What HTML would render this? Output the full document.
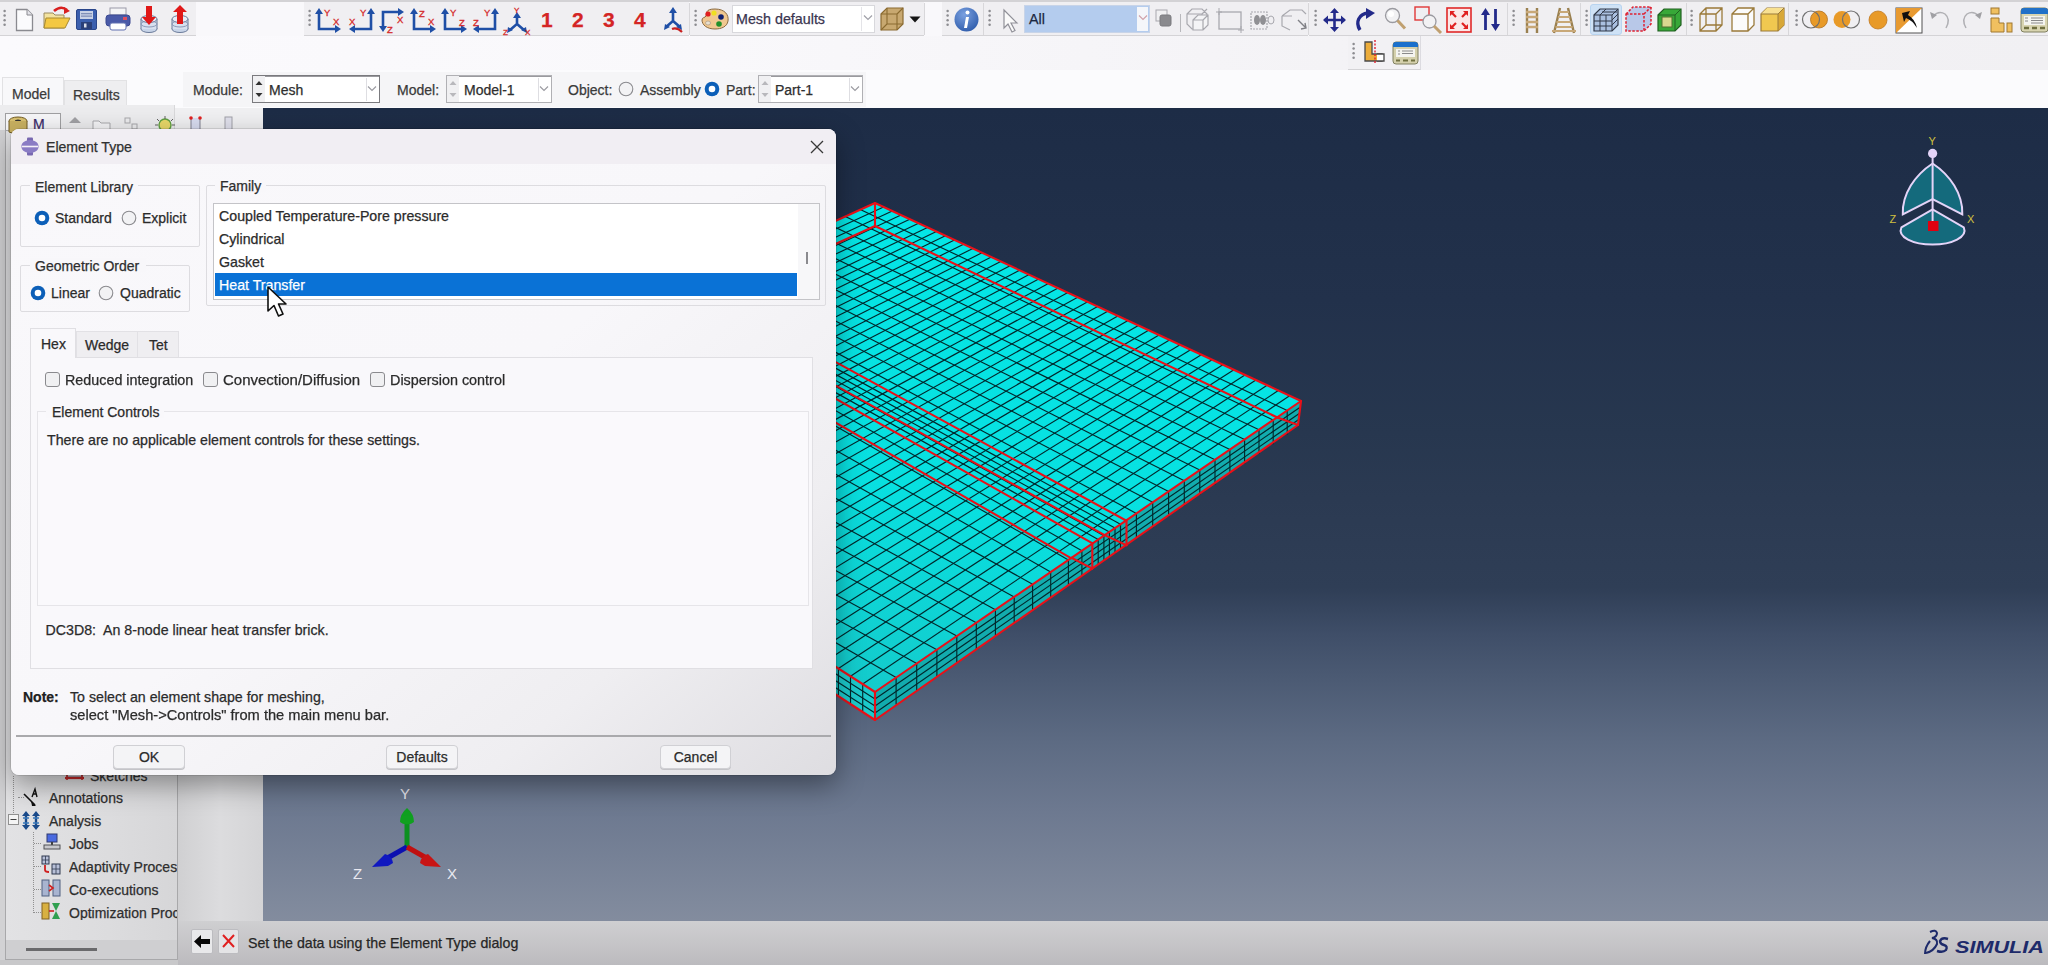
<!DOCTYPE html>
<html><head><meta charset="utf-8"><title>Abaqus</title>
<style>*{box-sizing:border-box;margin:0;padding:0}
html,body{width:2048px;height:965px;overflow:hidden;background:#f5f4f7;font-family:"Liberation Sans",sans-serif;color:#2b2b2b;position:relative}
.a{position:absolute}
.t{position:absolute;font-size:14px;white-space:nowrap;color:#2b2b2b;line-height:1;-webkit-text-stroke:0.25px currentColor}
#tb{left:0;top:0;width:2048px;height:108px;background:#f5f4f7}
#vp{left:263px;top:108px;width:1785px;height:813px;background:linear-gradient(#1d2c46 0%,#22314b 23.6%,#27374f 40%,#2b3a52 48%,#2f3e56 59%,#3f4e68 64.7%,#4b5a73 70%,#5d6b83 78%,#6d7990 86.6%,#7f899c 97.7%,#838c9e 100%)}
.grp{position:absolute;top:2px;height:34px;background:#f0eff2;border-bottom:1px solid #d4d3d6}
.grip{position:absolute;width:3px;height:18px;top:8px;background:radial-gradient(circle,#8a8a8a 0.9px,transparent 1.2px) 0 0/3px 4.5px}
</style></head><body>
<div id="tb" class="a"></div>
<div class="a" style="left:0;top:0;width:2048px;height:2px;background:#d3d2d5"></div>
<div class="a" style="left:0;top:2px;width:2048px;height:34px;background:#f9f8fb"></div>
<div class="a" style="left:0;top:36px;width:2048px;height:34px;background:linear-gradient(90deg,#fbfafd 0%,#f9f8fb 35%,#f4f3f6 65%,#f1f0f3 100%)"></div>
<div class="grp" style="left:0px;width:196px;top:2px;height:34px"></div>
<div class="grp" style="left:304px;width:385px;top:2px;height:34px"></div>
<div class="grp" style="left:690px;width:234px;top:2px;height:34px"></div>
<div class="grp" style="left:942px;width:41px;top:2px;height:34px"></div>
<div class="grp" style="left:983px;width:325px;top:2px;height:34px"></div>
<div class="grp" style="left:1309px;width:198px;top:2px;height:34px"></div>
<div class="grp" style="left:1507px;width:73px;top:2px;height:34px"></div>
<div class="grp" style="left:1580px;width:106px;top:2px;height:34px"></div>
<div class="grp" style="left:1686px;width:102px;top:2px;height:34px"></div>
<div class="grp" style="left:1788px;width:260px;top:2px;height:34px"></div>
<div class="a" style="left:689px;top:3px;width:1px;height:32px;background:#d8d7da"></div>
<div class="a" style="left:924px;top:3px;width:1px;height:32px;background:#d8d7da"></div>
<div class="a" style="left:983px;top:3px;width:1px;height:32px;background:#d8d7da"></div>
<div class="a" style="left:1308px;top:3px;width:1px;height:32px;background:#d8d7da"></div>
<div class="a" style="left:1507px;top:3px;width:1px;height:32px;background:#d8d7da"></div>
<div class="a" style="left:1580px;top:3px;width:1px;height:32px;background:#d8d7da"></div>
<div class="a" style="left:1686px;top:3px;width:1px;height:32px;background:#d8d7da"></div>
<div class="a" style="left:1788px;top:3px;width:1px;height:32px;background:#d8d7da"></div>
<svg class="a" style="left:3px;top:9px;overflow:visible;" width="4" height="19" viewBox="0 0 4 19"><circle cx="1.6" cy="2.0" r="1.25" fill="#8c8c90"/><circle cx="1.6" cy="6.6" r="1.25" fill="#8c8c90"/><circle cx="1.6" cy="11.2" r="1.25" fill="#8c8c90"/><circle cx="1.6" cy="15.8" r="1.25" fill="#8c8c90"/></svg>
<svg class="a" style="left:308px;top:9px;overflow:visible;" width="4" height="19" viewBox="0 0 4 19"><circle cx="1.6" cy="2.0" r="1.25" fill="#8c8c90"/><circle cx="1.6" cy="6.6" r="1.25" fill="#8c8c90"/><circle cx="1.6" cy="11.2" r="1.25" fill="#8c8c90"/><circle cx="1.6" cy="15.8" r="1.25" fill="#8c8c90"/></svg>
<svg class="a" style="left:694px;top:9px;overflow:visible;" width="4" height="19" viewBox="0 0 4 19"><circle cx="1.6" cy="2.0" r="1.25" fill="#8c8c90"/><circle cx="1.6" cy="6.6" r="1.25" fill="#8c8c90"/><circle cx="1.6" cy="11.2" r="1.25" fill="#8c8c90"/><circle cx="1.6" cy="15.8" r="1.25" fill="#8c8c90"/></svg>
<svg class="a" style="left:946px;top:9px;overflow:visible;" width="4" height="19" viewBox="0 0 4 19"><circle cx="1.6" cy="2.0" r="1.25" fill="#8c8c90"/><circle cx="1.6" cy="6.6" r="1.25" fill="#8c8c90"/><circle cx="1.6" cy="11.2" r="1.25" fill="#8c8c90"/><circle cx="1.6" cy="15.8" r="1.25" fill="#8c8c90"/></svg>
<svg class="a" style="left:988px;top:9px;overflow:visible;" width="4" height="19" viewBox="0 0 4 19"><circle cx="1.6" cy="2.0" r="1.25" fill="#8c8c90"/><circle cx="1.6" cy="6.6" r="1.25" fill="#8c8c90"/><circle cx="1.6" cy="11.2" r="1.25" fill="#8c8c90"/><circle cx="1.6" cy="15.8" r="1.25" fill="#8c8c90"/></svg>
<svg class="a" style="left:1314px;top:9px;overflow:visible;" width="4" height="19" viewBox="0 0 4 19"><circle cx="1.6" cy="2.0" r="1.25" fill="#8c8c90"/><circle cx="1.6" cy="6.6" r="1.25" fill="#8c8c90"/><circle cx="1.6" cy="11.2" r="1.25" fill="#8c8c90"/><circle cx="1.6" cy="15.8" r="1.25" fill="#8c8c90"/></svg>
<svg class="a" style="left:1512px;top:9px;overflow:visible;" width="4" height="19" viewBox="0 0 4 19"><circle cx="1.6" cy="2.0" r="1.25" fill="#8c8c90"/><circle cx="1.6" cy="6.6" r="1.25" fill="#8c8c90"/><circle cx="1.6" cy="11.2" r="1.25" fill="#8c8c90"/><circle cx="1.6" cy="15.8" r="1.25" fill="#8c8c90"/></svg>
<svg class="a" style="left:1585px;top:9px;overflow:visible;" width="4" height="19" viewBox="0 0 4 19"><circle cx="1.6" cy="2.0" r="1.25" fill="#8c8c90"/><circle cx="1.6" cy="6.6" r="1.25" fill="#8c8c90"/><circle cx="1.6" cy="11.2" r="1.25" fill="#8c8c90"/><circle cx="1.6" cy="15.8" r="1.25" fill="#8c8c90"/></svg>
<svg class="a" style="left:1690px;top:9px;overflow:visible;" width="4" height="19" viewBox="0 0 4 19"><circle cx="1.6" cy="2.0" r="1.25" fill="#8c8c90"/><circle cx="1.6" cy="6.6" r="1.25" fill="#8c8c90"/><circle cx="1.6" cy="11.2" r="1.25" fill="#8c8c90"/><circle cx="1.6" cy="15.8" r="1.25" fill="#8c8c90"/></svg>
<svg class="a" style="left:1795px;top:9px;overflow:visible;" width="4" height="19" viewBox="0 0 4 19"><circle cx="1.6" cy="2.0" r="1.25" fill="#8c8c90"/><circle cx="1.6" cy="6.6" r="1.25" fill="#8c8c90"/><circle cx="1.6" cy="11.2" r="1.25" fill="#8c8c90"/><circle cx="1.6" cy="15.8" r="1.25" fill="#8c8c90"/></svg>
<svg class="a" style="left:15px;top:8px;overflow:visible;" width="19" height="24" viewBox="0 0 19 24"><path d="M1.5,1.5 H12 L17.5,7 V22.5 H1.5z" fill="#fbfbfd" stroke="#8a8a90" stroke-width="1.3"/><path d="M12,1.5 V7 H17.5" fill="#e4e4ea" stroke="#8a8a90" stroke-width="1"/></svg>
<svg class="a" style="left:43px;top:5px;overflow:visible;" width="28" height="25" viewBox="0 0 28 25"><path d="M1,8 H10 L12,10 H21 V23 H1z" fill="#f3e3a0" stroke="#9a8a60" stroke-width="1"/><path d="M3,13 H27 L22,23 H1z" fill="#f4c842" stroke="#a88a30" stroke-width="1"/><path d="M11,6 Q18,0 24,5" stroke="#d82020" stroke-width="2.6" fill="none"/><path d="M21,2 L27,6 L21,9z" fill="#d82020"/></svg>
<svg class="a" style="left:76px;top:9px;overflow:visible;" width="21" height="21" viewBox="0 0 21 21"><rect x="0.5" y="0.5" width="20" height="20" rx="1.5" fill="#3b5fae" stroke="#2a468a"/><rect x="4" y="2" width="13" height="8" fill="#c9d2e6"/><rect x="5" y="4" width="11" height="1.3" fill="#8090b8"/><rect x="5" y="6.5" width="11" height="1.3" fill="#8090b8"/><rect x="5" y="13" width="11" height="7" fill="#2a3f78"/><rect x="8" y="14.5" width="2.5" height="4" fill="#d8dce8"/></svg>
<svg class="a" style="left:105px;top:7px;overflow:visible;" width="26" height="25" viewBox="0 0 26 25"><rect x="5" y="1" width="16" height="7" fill="#f4f4f6" stroke="#9a9aa8"/><rect x="1" y="8" width="24" height="11" rx="3" fill="#4a5aa8" stroke="#3a4890"/><rect x="5" y="16" width="16" height="7" rx="2" fill="#fff" stroke="#6070b0"/><rect x="18" y="10" width="4" height="3" fill="#e05060"/></svg>
<svg class="a" style="left:140px;top:5px;overflow:visible;" width="19" height="29" viewBox="0 0 19 29"><ellipse cx="9" cy="24" rx="8" ry="3.5" fill="#c8d4e8" stroke="#6a7a9a"/><rect x="1" y="14" width="16" height="10" fill="#d8e0f0"/><path d="M1,14 V24 M17,14 V24" stroke="#6a7a9a"/><ellipse cx="9" cy="19" rx="8" ry="3" fill="none" stroke="#8a9ab8"/><ellipse cx="9" cy="14" rx="8" ry="3.5" fill="#e8eef8" stroke="#6a7a9a"/><path d="M6,1 H12 V12 H16 L9,20 L2,12 H6z" fill="#e01818"/></svg>
<svg class="a" style="left:171px;top:5px;overflow:visible;" width="19" height="29" viewBox="0 0 19 29"><ellipse cx="9" cy="24" rx="8" ry="3.5" fill="#c8d4e8" stroke="#6a7a9a"/><rect x="1" y="14" width="16" height="10" fill="#d8e0f0"/><path d="M1,14 V24 M17,14 V24" stroke="#6a7a9a"/><ellipse cx="9" cy="19" rx="8" ry="3" fill="none" stroke="#8a9ab8"/><ellipse cx="9" cy="14" rx="8" ry="3.5" fill="#e8eef8" stroke="#6a7a9a"/><path d="M9,0 L16,7 H12 V19 H6 V7 H2z" fill="#e01818"/></svg>
<svg class="a" style="left:316px;top:7px;overflow:visible;" width="27" height="28" viewBox="0 0 27 28"><path d="M3,4 V22 H22" stroke="#1f4fa6" stroke-width="2.6" fill="none"/><path d="M-1,7 L3,1 L7,7z" fill="#1f4fa6"/><path d="M19,18 L25,22 L19,26z" fill="#1f4fa6"/><text x="8" y="9" font-size="9.5" stroke="#d42a2a" stroke-width="0.3" fill="#d42a2a" font-family="Liberation Sans">Y</text><text x="17" y="18" font-size="9.5" stroke="#d42a2a" stroke-width="0.3" fill="#d42a2a" font-family="Liberation Sans">X</text></svg>
<svg class="a" style="left:348px;top:7px;overflow:visible;" width="27" height="28" viewBox="0 0 27 28"><path d="M23,4 V22 H4" stroke="#1f4fa6" stroke-width="2.6" fill="none"/><path d="M19,7 L23,1 L27,7z" fill="#1f4fa6"/><path d="M7,18 L1,22 L7,26z" fill="#1f4fa6"/><text x="12" y="9" font-size="9.5" stroke="#d42a2a" stroke-width="0.3" fill="#d42a2a" font-family="Liberation Sans">Y</text><text x="1" y="18" font-size="9.5" stroke="#d42a2a" stroke-width="0.3" fill="#d42a2a" font-family="Liberation Sans">X</text></svg>
<svg class="a" style="left:379px;top:7px;overflow:visible;" width="27" height="28" viewBox="0 0 27 28"><path d="M4,21 V5 H21" stroke="#1f4fa6" stroke-width="2.6" fill="none"/><path d="M0,19 L4,25 L8,19z" fill="#1f4fa6"/><path d="M19,1 L25,5 L19,9z" fill="#1f4fa6"/><text x="8" y="26" font-size="9.5" stroke="#d42a2a" stroke-width="0.3" fill="#d42a2a" font-family="Liberation Sans">Z</text><text x="18" y="16" font-size="9.5" stroke="#d42a2a" stroke-width="0.3" fill="#d42a2a" font-family="Liberation Sans">X</text></svg>
<svg class="a" style="left:411px;top:7px;overflow:visible;" width="27" height="28" viewBox="0 0 27 28"><path d="M3,4 V22 H22" stroke="#1f4fa6" stroke-width="2.6" fill="none"/><path d="M-1,7 L3,1 L7,7z" fill="#1f4fa6"/><path d="M19,18 L25,22 L19,26z" fill="#1f4fa6"/><text x="8" y="10" font-size="9.5" stroke="#d42a2a" stroke-width="0.3" fill="#d42a2a" font-family="Liberation Sans">Z</text><text x="17" y="18" font-size="9.5" stroke="#d42a2a" stroke-width="0.3" fill="#d42a2a" font-family="Liberation Sans">X</text></svg>
<svg class="a" style="left:442px;top:7px;overflow:visible;" width="27" height="28" viewBox="0 0 27 28"><path d="M3,4 V22 H22" stroke="#1f4fa6" stroke-width="2.6" fill="none"/><path d="M-1,7 L3,1 L7,7z" fill="#1f4fa6"/><path d="M19,18 L25,22 L19,26z" fill="#1f4fa6"/><text x="8" y="9" font-size="9.5" stroke="#d42a2a" stroke-width="0.3" fill="#d42a2a" font-family="Liberation Sans">Y</text><text x="17" y="19" font-size="9.5" stroke="#d42a2a" stroke-width="0.3" fill="#d42a2a" font-family="Liberation Sans">Z</text></svg>
<svg class="a" style="left:472px;top:7px;overflow:visible;" width="27" height="28" viewBox="0 0 27 28"><path d="M23,4 V22 H4" stroke="#1f4fa6" stroke-width="2.6" fill="none"/><path d="M19,7 L23,1 L27,7z" fill="#1f4fa6"/><path d="M7,18 L1,22 L7,26z" fill="#1f4fa6"/><text x="12" y="9" font-size="9.5" stroke="#d42a2a" stroke-width="0.3" fill="#d42a2a" font-family="Liberation Sans">Y</text><text x="1" y="19" font-size="9.5" stroke="#d42a2a" stroke-width="0.3" fill="#d42a2a" font-family="Liberation Sans">Z</text></svg>
<svg class="a" style="left:503px;top:7px;overflow:visible;" width="27" height="28" viewBox="0 0 27 28"><path d="M14,9 V17 L7,23 M14,17 L21,23" stroke="#1f4fa6" stroke-width="2.6" fill="none"/><path d="M10,11 L14,5 L18,11z" fill="#1f4fa6"/><path d="M4,26 l1,-6 l5,3z M24,26 l-1,-6 l-5,3z" fill="#1f4fa6"/><text x="11" y="6" font-size="8" stroke="#d42a2a" stroke-width="0.3" fill="#d42a2a" font-family="Liberation Sans">Y</text><text x="0" y="28" font-size="8" stroke="#d42a2a" stroke-width="0.3" fill="#d42a2a" font-family="Liberation Sans">Z</text><text x="22" y="28" font-size="8" stroke="#d42a2a" stroke-width="0.3" fill="#d42a2a" font-family="Liberation Sans">X</text></svg>
<div class="t" style="left:541px;top:9px;font-size:21px;font-weight:bold;color:#d42525">1</div>
<div class="t" style="left:572px;top:9px;font-size:21px;font-weight:bold;color:#d42525">2</div>
<div class="t" style="left:603px;top:9px;font-size:21px;font-weight:bold;color:#d42525">3</div>
<div class="t" style="left:634px;top:9px;font-size:21px;font-weight:bold;color:#d42525">4</div>
<svg class="a" style="left:663px;top:6px;overflow:visible;" width="22" height="28" viewBox="0 0 22 28"><path d="M10,6 V15 L3,21 M10,15 L17,21" stroke="#1f4fa6" stroke-width="2.6" fill="none"/><path d="M6,7 L10,1 L14,7z" fill="#1f4fa6"/><path d="M1,24 l1,-6 l5,3z M19,24 l-1,-6 l-5,3z" fill="#1f4fa6"/><path d="M9,23 Q14,21 19,26" stroke="#c82020" stroke-width="2.2" fill="none"/></svg>
<svg class="a" style="left:701px;top:8px;overflow:visible;" width="28" height="22" viewBox="0 0 28 22"><path d="M14,1 C24,1 28,7 27,13 C26,19 20,21 14,21 C6,21 1,17 1,12 C1,9 4,10 5,8 C6,5 4,1 14,1z" fill="#f0c890" stroke="#8a6a40"/><circle cx="7" cy="6" r="2.6" fill="#e02020"/><circle cx="13" cy="5" r="2.6" fill="#f0e020"/><circle cx="20" cy="9" r="2.8" fill="#102070"/><circle cx="18" cy="16" r="2.8" fill="#20902a"/><ellipse cx="7" cy="15" rx="2.5" ry="2" fill="#e8e0d0" stroke="#a09080" stroke-width=".6"/></svg>
<div class="a" style="left:732px;top:5px;width:143px;height:28px;background:#fff;border:1px solid #d8d8dc"></div>
<div class="t" style="left:736px;top:12px;font-size:14.3px;color:#3a3550">Mesh defaults</div>
<div class="a" style="left:861px;top:7px;width:12px;height:24px;border-left:1px solid #e4e4e8"></div>
<svg class="a" style="left:863px;top:14px;overflow:visible;" width="10" height="8" viewBox="0 0 10 8"><path d="M1,1.5 L5,5.5 L9,1.5" stroke="#a0a0a8" stroke-width="1.2" fill="none"/></svg>
<svg class="a" style="left:880px;top:7px;overflow:visible;" width="25" height="24" viewBox="0 0 25 24"><path d="M1,7 L7,1 H23 V17 L17,23 H1z" fill="#c8a870" stroke="#8a6a30" stroke-width="1.2"/><path d="M1,7 H17 V23 M17,7 L23,1 M7,1 V17 H23 M7,17 L1,23" stroke="#8a6a30" stroke-width="1.1" fill="none"/></svg>
<svg class="a" style="left:909px;top:16px;overflow:visible;" width="12" height="7" viewBox="0 0 12 7"><path d="M0.5,0.5 H11.5 L6,6.5z" fill="#151515"/></svg>
<svg class="a" style="left:954px;top:7px;overflow:visible;" width="25" height="25" viewBox="0 0 25 25"><defs><radialGradient id="ig" cx=".4" cy=".3" r=".8"><stop offset="0" stop-color="#7aa0e0"/><stop offset="1" stop-color="#2a58a8"/></radialGradient></defs><circle cx="12.5" cy="12.5" r="12" fill="url(#ig)"/><circle cx="13.5" cy="5.5" r="2" fill="#fff"/><path d="M12,10 L10,21 H13 L15,10z" fill="#fff"/></svg>
<svg class="a" style="left:1002px;top:9px;overflow:visible;" width="18" height="24" viewBox="0 0 18 24"><path d="M2,1 V19 L6,15 L10,23 L13,21.5 L9,14 H15z" fill="#fafafa" stroke="#909098" stroke-width="1.2"/></svg>
<div class="a" style="left:1024px;top:5px;width:126px;height:28px;background:#b4ccee;border:1px solid #c8d4e8"></div>
<div class="a" style="left:1137px;top:7px;width:11px;height:24px;background:#f4f6fa"></div>
<svg class="a" style="left:1138px;top:14px;overflow:visible;" width="10" height="8" viewBox="0 0 10 8"><path d="M1,1.5 L5,5.5 L9,1.5" stroke="#d0a0a8" stroke-width="1.1" fill="none"/></svg>
<div class="t" style="left:1029px;top:12px;font-size:14.3px;color:#1c2840">All</div>
<svg class="a" style="left:1155px;top:9px;overflow:visible;" width="18" height="22" viewBox="0 0 18 22"><rect x="1" y="1" width="11" height="11" fill="#f0f0f2" stroke="#a8a8ae"/><rect x="5" y="6" width="11" height="11" rx="2" fill="#8a8a8e" stroke="#7a7a7e"/></svg>
<div class="a" style="left:1180px;top:14px;width:1px;height:18px;background:#b8b8bc"></div>
<svg class="a" style="left:1185px;top:8px;overflow:visible;" width="28" height="26" viewBox="0 0 28 26"><path d="M2,6 L7,1 H17 L22,6 V16 L17,21 H7 L2,16z M2,6 H17 V21 M17,6 L22,1" fill="none" stroke="#a8a8ae" stroke-width="1.2"/><path d="M8,12 L13,7 H23 V17 L18,22 H8z M8,12 H18 V22 M18,12 L23,7" fill="#f4f4f6" stroke="#a8a8ae" stroke-width="1.2"/></svg>
<svg class="a" style="left:1216px;top:7px;overflow:visible;" width="29" height="27" viewBox="0 0 29 27"><rect x="3" y="5" width="22" height="17" fill="none" stroke="#a8a8ae" stroke-width="1.3"/><path d="M3,1 V8 M0,5 H6 M25,19 V26 M22,23 H28" stroke="#a8a8ae" stroke-width="1"/></svg>
<svg class="a" style="left:1248px;top:7px;overflow:visible;" width="28" height="27" viewBox="0 0 28 27"><rect x="3" y="5" width="16" height="17" fill="none" stroke="#a8a8ae" stroke-width="1.2" stroke-dasharray="2 1"/><ellipse cx="9" cy="13" rx="3" ry="5" fill="#909094"/><ellipse cx="15" cy="13" rx="3" ry="5" fill="#909094"/><ellipse cx="23" cy="13" rx="3" ry="4" fill="none" stroke="#a8a8ae"/></svg>
<svg class="a" style="left:1280px;top:8px;overflow:visible;" width="29" height="25" viewBox="0 0 29 25"><path d="M2,8 L10,2 H22 L26,6 M2,8 V18 L10,22 M2,8 H12" fill="none" stroke="#a8a8ae" stroke-width="1.2"/><path d="M18,12 L26,20 M21,21 L26,20 L25,15" stroke="#808086" stroke-width="1.4" fill="none"/></svg>
<svg class="a" style="left:1323px;top:8px;overflow:visible;" width="23" height="24" viewBox="0 0 23 24"><path d="M11.5,2 V22 M1.5,12 H21.5" stroke="#232a8a" stroke-width="2.6"/><path d="M11.5,0 L7,5 H16z M11.5,24 L7,19 H16z M0,12 L5,7.5 V16.5z M23,12 L18,7.5 V16.5z" fill="#232a8a"/></svg>
<svg class="a" style="left:1355px;top:8px;overflow:visible;" width="21" height="24" viewBox="0 0 21 24"><path d="M5,22 C0,14 4,6 13,5" stroke="#232a8a" stroke-width="3.4" fill="none"/><path d="M11,0 L20,5 L11,11z" fill="#232a8a"/></svg>
<svg class="a" style="left:1384px;top:7px;overflow:visible;" width="23" height="24" viewBox="0 0 23 24"><circle cx="8.5" cy="8.5" r="7" fill="#f2f2f4" stroke="#9a9aa0" stroke-width="1.3"/><circle cx="7" cy="7" r="3" fill="#fff"/><path d="M13.5,13.5 L21,21.5" stroke="#c0a070" stroke-width="3"/></svg>
<svg class="a" style="left:1414px;top:6px;overflow:visible;" width="29" height="28" viewBox="0 0 29 28"><rect x="1" y="1" width="14" height="13" fill="none" stroke="#e03838" stroke-width="1.4"/><circle cx="15.5" cy="15.5" r="6.5" fill="#f2f2f4" stroke="#9a9aa0" stroke-width="1.3"/><path d="M20,20 L27,27" stroke="#c0a070" stroke-width="3"/></svg>
<svg class="a" style="left:1446px;top:7px;overflow:visible;" width="26" height="26" viewBox="0 0 26 26"><rect x="1" y="1" width="24" height="24" fill="#fbe8e8" stroke="#e02828" stroke-width="1.6"/><path d="M6,6 L10,10 M20,6 L16,10 M6,20 L10,16 M20,20 L16,16" stroke="#e02020" stroke-width="2.2"/><path d="M4,4 H9 L4,9z M22,4 H17 L22,9z M4,22 H9 L4,17z M22,22 H17 L22,17z" fill="#e02020"/></svg>
<svg class="a" style="left:1480px;top:8px;overflow:visible;" width="21" height="23" viewBox="0 0 21 23"><path d="M5.5,4 V22 M15.5,1 V19" stroke="#232a8a" stroke-width="2.8"/><path d="M5.5,0 L1,7 H10z M15.5,23 L11,16 H20z" fill="#232a8a"/></svg>
<svg class="a" style="left:1523px;top:7px;overflow:visible;" width="18" height="27" viewBox="0 0 18 27"><path d="M4,1 V26 M14,1 V26" stroke="#9a8050" stroke-width="2.4"/><path d="M3,5 H15 M3,10 H15 M3,15 H15 M3,20 H15" stroke="#c8a878" stroke-width="2.4"/></svg>
<svg class="a" style="left:1551px;top:7px;overflow:visible;" width="26" height="27" viewBox="0 0 26 27"><path d="M9,1 L3,26 M17,1 L23,26" stroke="#9a8050" stroke-width="2.4"/><path d="M8,5 H18 M7,10 H19 M5.5,15 H20.5 M4.5,20 H21.5 M1,24 H25" stroke="#c8a878" stroke-width="2.2"/></svg>
<div class="a" style="left:1590px;top:4px;width:32px;height:31px;background:#cfe2f6;border:1px solid #b8d4f0;border-radius:3px"></div>
<svg class="a" style="left:1593px;top:8px;overflow:visible;" width="27" height="24" viewBox="0 0 27 24"><path d="M1,7 L7,1 H25 V17 L19,23 H1z" fill="#aac0e0" stroke="#303848" stroke-width="1.2"/><path d="M1,7 H19 V23 M19,7 L25,1 M7,7 V23 M13,7 V23 M1,13 H19 M1,18 H19 M9,4 H24 M13,1 L7,7" stroke="#303848" stroke-width="1" fill="none"/><path d="M19,12 L25,6 M19,17 L25,11" stroke="#303848" stroke-width="1"/></svg>
<svg class="a" style="left:1625px;top:6px;overflow:visible;" width="27" height="26" viewBox="0 0 27 26"><path d="M1,8 L8,1 H26 V18 L19,25 H1z" fill="#b8c8e8" stroke="#e02030" stroke-width="1.5" stroke-dasharray="2.5 1.5"/><path d="M1,8 H19 V25 M19,8 L26,1" stroke="#e02030" stroke-width="1.5" stroke-dasharray="2.5 1.5" fill="none"/></svg>
<svg class="a" style="left:1657px;top:8px;overflow:visible;" width="25" height="24" viewBox="0 0 25 24"><path d="M1,7 L7,1 H24 V17 L18,23 H1z" fill="#38a838" stroke="#206020" stroke-width="1.2"/><rect x="5" y="9" width="10" height="10" fill="#d8d890" stroke="#507030"/><path d="M1,7 H18 V23 M18,7 L24,1" stroke="#206020" fill="none"/></svg>
<svg class="a" style="left:1699px;top:7px;overflow:visible;" width="24" height="25" viewBox="0 0 24 25"><path d="M1,7 L7,1 H23 V18 L17,24 H1z M1,7 H17 V24 M17,7 L23,1 M7,1 V18 H23 M7,18 L1,24" fill="none" stroke="#9a7a3a" stroke-width="1.3"/></svg>
<svg class="a" style="left:1731px;top:7px;overflow:visible;" width="24" height="25" viewBox="0 0 24 25"><path d="M1,7 L7,1 H23 V18 L17,24 H1z M1,7 H17 V24 M17,7 L23,1" fill="#fbfbfb" stroke="#9a7a3a" stroke-width="1.3"/></svg>
<svg class="a" style="left:1760px;top:7px;overflow:visible;" width="25" height="25" viewBox="0 0 25 25"><path d="M1,7 L7,1 H24 V18 L18,24 H1z" fill="#f0c850" stroke="#9a7a3a" stroke-width="1.2"/><path d="M1,7 L7,1 H24 L18,7z" fill="#f8e090"/><path d="M18,7 L24,1 V18 L18,24z" fill="#d8a838"/><path d="M1,7 H18 V24 M18,7 L24,1" stroke="#9a7a3a" fill="none"/></svg>
<svg class="a" style="left:1801px;top:9px;overflow:visible;" width="28" height="21" viewBox="0 0 28 21"><circle cx="18" cy="10.5" r="8.5" fill="#e89a28"/><circle cx="10" cy="10.5" r="8.5" fill="none" stroke="#707070" stroke-width="1.2"/><circle cx="18" cy="10.5" r="8.5" fill="none" stroke="#b07020" stroke-width=".8"/></svg>
<svg class="a" style="left:1832px;top:9px;overflow:visible;" width="29" height="21" viewBox="0 0 29 21"><circle cx="10" cy="10.5" r="8.5" fill="#e89a28"/><circle cx="19" cy="10.5" r="8.5" fill="none" stroke="#707070" stroke-width="1.2"/></svg>
<svg class="a" style="left:1868px;top:10px;overflow:visible;" width="21" height="20" viewBox="0 0 21 20"><circle cx="10" cy="10" r="9" fill="#e89a28" stroke="#c07820" stroke-width=".8"/></svg>
<svg class="a" style="left:1895px;top:7px;overflow:visible;" width="28" height="27" viewBox="0 0 28 27"><rect x="1" y="1" width="26" height="25" fill="#fff" stroke="#505050"/><path d="M1,1 H27 L1,26z" fill="#e89a30"/><path d="M7,6 L15,4 L13,8 Q20,12 22,21 Q17,13 11,11 L9,15z" fill="#101010"/></svg>
<svg class="a" style="left:1929px;top:9px;overflow:visible;" width="22" height="22" viewBox="0 0 22 22"><path d="M4,7 Q10,1 16,5 Q22,10 17,19" stroke="#b0b0b4" stroke-width="1.5" fill="none"/><path d="M1,3 L3,10 L8,6z" fill="#a0a0a4"/></svg>
<svg class="a" style="left:1960px;top:9px;overflow:visible;" width="23" height="22" viewBox="0 0 23 22"><path d="M19,7 Q13,1 7,5 Q1,10 6,19" stroke="#b0b0b4" stroke-width="1.5" fill="none"/><path d="M22,3 L20,10 L15,6z" fill="#a0a0a4"/></svg>
<svg class="a" style="left:1990px;top:7px;overflow:visible;" width="24" height="26" viewBox="0 0 24 26"><rect x="1" y="1" width="8" height="6" fill="#f0c060" stroke="#a07830"/><path d="M1,11 H9 V16 H14 V25 H1z" fill="#f0c060" stroke="#a07830"/><rect x="17" y="16" width="5" height="9" fill="#f0c060" stroke="#a07830"/></svg>
<svg class="a" style="left:2020px;top:7px;overflow:visible;" width="28" height="26" viewBox="0 0 28 26"><rect x="1" y="1" width="27" height="24" rx="3" fill="#d8d4b0" stroke="#808060"/><path d="M1,4 Q1,1 4,1 H25 Q28,1 28,4 V7 H1z" fill="#2070c8"/><rect x="4" y="9" width="21" height="9" fill="#f4f4f0"/><path d="M11,11 H23 M11,13.5 H23 M11,16 H23 M5,11 H8 M5,14 H8" stroke="#8a8a8a" stroke-width="1.2"/><path d="M4,21 H9 M12,21 H17 M20,21 H25" stroke="#707040" stroke-width="2.4"/></svg>
<div class="a" style="left:1348px;top:36px;width:73px;height:34px;background:#f2f1f4;border-bottom:1px solid #d4d3d6;border-right:1px solid #dcdbe0"></div>
<svg class="a" style="left:1352px;top:42px;overflow:visible;" width="4" height="19" viewBox="0 0 4 19"><circle cx="1.6" cy="2.0" r="1.25" fill="#8c8c90"/><circle cx="1.6" cy="6.6" r="1.25" fill="#8c8c90"/><circle cx="1.6" cy="11.2" r="1.25" fill="#8c8c90"/><circle cx="1.6" cy="15.8" r="1.25" fill="#8c8c90"/></svg>
<svg class="a" style="left:1363px;top:40px;overflow:visible;" width="23" height="24" viewBox="0 0 23 24"><path d="M2,2 H9 V14 H19 V21 H2z" fill="#ecac3a" stroke="#4a4a4a" stroke-width="1.3"/><path d="M14,14 H21 V21 H14" fill="#fff" stroke="#4a4a4a" stroke-width="1.3"/><path d="M12,0 V24" stroke="#e02030" stroke-width="1.4" stroke-dasharray="2 1.5"/></svg>
<svg class="a" style="left:1392px;top:41px;overflow:visible;" width="27" height="24" viewBox="0 0 27 24"><rect x="1" y="1" width="25" height="22" rx="3" fill="#d4d0ac" stroke="#808060"/><path d="M1,4 Q1,1 4,1 H23 Q26,1 26,4 V6 H1z" fill="#1a70cc"/><rect x="4" y="8" width="19" height="8" fill="#f4f4f0"/><path d="M10,10 H21 M10,12.5 H21 M6,10 H8 M6,13 H8" stroke="#8a8a8a" stroke-width="1.1"/><path d="M4,19.5 H8 M11,19.5 H16 M19,19.5 H23" stroke="#707040" stroke-width="2.2"/></svg>
<div class="a" style="left:0px;top:70px;width:2048px;height:38px;background:#fbfbfd"></div>
<div class="a" style="left:183px;top:72px;width:683px;height:35px;background:#f5f5f7"></div>
<div class="a" style="left:64px;top:80px;width:63px;height:26px;background:#eeeef0;border:1px solid #e2e2e4;border-bottom:none"></div>
<div class="a" style="left:2px;top:77px;width:62px;height:31px;background:#f8f8fa;border:1px solid #e2e2e4;border-bottom:none"></div>
<div class="t" style="left:12px;top:87.1px;font-size:14px;color:#3a3a3a;">Model</div>
<div class="t" style="left:73px;top:88.1px;font-size:14px;color:#3a3a3a;">Results</div>
<div class="t" style="left:193px;top:83.1px;font-size:14px;color:#3a3a3a;">Module:</div>
<div class="a" style="left:252px;top:75px;width:128px;height:28px;background:#fff;border:1px solid #7a7a7e;box-shadow:inset 1px 1px 0 #9a9a9e"></div><div class="a" style="left:253px;top:76px;width:12px;height:26px;background:#f0f0f2"></div><svg class="a" style="left:254px;top:80px;overflow:visible;" width="10" height="18" viewBox="0 0 10 18"><path d="M1.5,5 L5,1 L8.5,5z M1.5,13 L5,17 L8.5,13z" fill="#303030"/></svg><div class="a" style="left:366px;top:78px;width:12px;height:23px;border-left:1px solid #dedee2;background:#fff"></div><svg class="a" style="left:367px;top:85px;overflow:visible;" width="10" height="8" viewBox="0 0 10 8"><path d="M1,1.5 L5,5.5 L9,1.5" stroke="#9a9aa0" stroke-width="1.1" fill="none"/></svg><div class="t" style="left:269px;top:83.1px;font-size:14px;color:#2e2e2e;">Mesh</div>
<div class="t" style="left:397px;top:83.1px;font-size:14px;color:#3a3a3a;">Model:</div>
<div class="a" style="left:446px;top:75px;width:106px;height:28px;background:#fff;border:1px solid #b0b0b4;box-shadow:inset 1px 1px 0 #9a9a9e"></div><div class="a" style="left:447px;top:76px;width:12px;height:26px;background:#f0f0f2"></div><svg class="a" style="left:448px;top:80px;overflow:visible;" width="10" height="18" viewBox="0 0 10 18"><path d="M1.5,5 L5,1 L8.5,5z M1.5,13 L5,17 L8.5,13z" fill="#b8b8bc"/></svg><div class="a" style="left:538px;top:78px;width:12px;height:23px;border-left:1px solid #dedee2;background:#fff"></div><svg class="a" style="left:539px;top:85px;overflow:visible;" width="10" height="8" viewBox="0 0 10 8"><path d="M1,1.5 L5,5.5 L9,1.5" stroke="#9a9aa0" stroke-width="1.1" fill="none"/></svg><div class="t" style="left:464px;top:83.1px;font-size:14px;color:#2e2e2e;">Model-1</div>
<div class="t" style="left:568px;top:83.1px;font-size:14px;color:#3a3a3a;">Object:</div>
<svg class="a" style="left:618px;top:81px;overflow:visible;" width="16" height="16" viewBox="0 0 16 16"><circle cx="8" cy="8" r="6.8" fill="#f2f2f4" stroke="#8a8a8e" stroke-width="1.1"/></svg>
<div class="t" style="left:640px;top:83.1px;font-size:14px;color:#3a3a3a;">Assembly</div>
<svg class="a" style="left:704px;top:81px;overflow:visible;" width="16" height="16" viewBox="0 0 16 16"><circle cx="8" cy="8" r="7.3" fill="#0c5fb8"/><circle cx="8" cy="8" r="3.3" fill="#fff"/></svg>
<div class="t" style="left:726px;top:83.1px;font-size:14px;color:#3a3a3a;">Part:</div>
<div class="a" style="left:758px;top:75px;width:105px;height:28px;background:#fff;border:1px solid #b0b0b4;box-shadow:inset 1px 1px 0 #9a9a9e"></div><div class="a" style="left:759px;top:76px;width:12px;height:26px;background:#f0f0f2"></div><svg class="a" style="left:760px;top:80px;overflow:visible;" width="10" height="18" viewBox="0 0 10 18"><path d="M1.5,5 L5,1 L8.5,5z M1.5,13 L5,17 L8.5,13z" fill="#b8b8bc"/></svg><div class="a" style="left:849px;top:78px;width:12px;height:23px;border-left:1px solid #dedee2;background:#fff"></div><svg class="a" style="left:850px;top:85px;overflow:visible;" width="10" height="8" viewBox="0 0 10 8"><path d="M1,1.5 L5,5.5 L9,1.5" stroke="#9a9aa0" stroke-width="1.1" fill="none"/></svg><div class="t" style="left:775px;top:83.1px;font-size:14px;color:#2e2e2e;">Part-1</div>
<div id="vp" class="a"></div>
<div class="a" style="left:0px;top:108px;width:263px;height:857px;background:#d2d2d4"></div>
<div class="a" style="left:175px;top:108px;width:88px;height:22px;background:#f0f0f2"></div>
<div class="a" style="left:0px;top:105px;width:175px;height:25px;background:#ececee;border-right:1px solid #d8d8da"></div>
<div class="a" style="left:5px;top:130px;width:173px;height:830px;background:linear-gradient(90deg,#e2e2e4,#dcdcde 60%,#d6d6d8);border:1px solid #a8a8aa"></div>
<div class="a" style="left:6px;top:940px;width:171px;height:19px;background:#cfcfd1"></div>
<div class="a" style="left:26px;top:948px;width:71px;height:3px;background:#6a6a6c"></div>
<div class="a" style="left:178px;top:130px;width:85px;height:791px;background:linear-gradient(90deg,#d0d0d2,#dcdcde 50%,#d4d4d6)"></div>
<div class="a" style="left:5px;top:113px;width:56px;height:17px;background:#f6f6f8;border:1px solid #a0a0a2;border-bottom:none"></div>
<svg class="a" style="left:8px;top:116px;overflow:visible;" width="20" height="18" viewBox="0 0 20 18"><ellipse cx="10" cy="5" rx="9" ry="4" fill="#d8c070" stroke="#705a20"/><ellipse cx="10" cy="5" rx="3" ry="1.5" fill="#303030"/><path d="M1,5 V16 Q10,20 19,16 V5" fill="#c8b060" stroke="#705a20"/></svg>
<div class="t" style="left:33px;top:117.1px;font-size:14px;color:#3a2a6a;">M</div>
<svg class="a" style="left:69px;top:117px;overflow:visible;" width="12" height="7" viewBox="0 0 12 7"><path d="M0,6 L6,0 L12,6z" fill="#a0a0a4"/></svg>
<svg class="a" style="left:92px;top:118px;overflow:visible;" width="19" height="12" viewBox="0 0 19 12"><path d="M1,12 V3 H7 L9,5 H18 V12" fill="#f4f4f6" stroke="#a8a8ac"/></svg>
<svg class="a" style="left:124px;top:117px;overflow:visible;" width="16" height="13" viewBox="0 0 16 13"><rect x="1" y="1" width="5" height="5" fill="none" stroke="#a8a8ac"/><rect x="8" y="7" width="5" height="5" fill="none" stroke="#a8a8ac"/></svg>
<svg class="a" style="left:155px;top:116px;overflow:visible;" width="20" height="14" viewBox="0 0 20 14"><circle cx="10" cy="9" r="6" fill="#e8d868" stroke="#60a040" stroke-width="1.4"/><path d="M10,0 V3 M2,3 L4,5 M18,3 L16,5 M0,9 H3 M17,9 H20" stroke="#606060"/></svg>
<svg class="a" style="left:189px;top:116px;overflow:visible;" width="13" height="14" viewBox="0 0 13 14"><rect x="2" y="2" width="9" height="12" fill="#d8dcf0"/><path d="M2,2 V14 M11,2 V14" stroke="#808090"/><circle cx="2" cy="2" r="1.8" fill="#e02020"/><circle cx="11" cy="2" r="1.8" fill="#e02020"/></svg>
<svg class="a" style="left:224px;top:116px;overflow:visible;" width="9" height="14" viewBox="0 0 9 14"><rect x="1" y="1" width="7" height="13" fill="#e0e0ec" stroke="#a0a0a8"/></svg>
<div class="a" style="left:13px;top:776px;width:1px;height:39px;border-left:1px dotted #909090"></div>
<div class="a" style="left:18px;top:797px;width:6px;height:1px;border-top:1px dotted #909090"></div>
<div class="a" style="left:33px;top:832px;width:1px;height:81px;border-left:1px dotted #909090"></div>
<div class="a" style="left:34px;top:843px;width:7px;height:1px;border-top:1px dotted #909090"></div>
<div class="a" style="left:34px;top:866px;width:7px;height:1px;border-top:1px dotted #909090"></div>
<div class="a" style="left:34px;top:889px;width:7px;height:1px;border-top:1px dotted #909090"></div>
<div class="a" style="left:34px;top:912px;width:7px;height:1px;border-top:1px dotted #909090"></div>
<svg class="a" style="left:64px;top:766px;overflow:visible;" width="22" height="16" viewBox="0 0 22 16"><rect x="3" y="2" width="15" height="9" fill="#e8e0e8" stroke="#606070"/><path d="M1,12 H20" stroke="#c02828" stroke-width="2.2"/><path d="M3,8 V14 M18,8 V14" stroke="#c02828" stroke-width="1.6"/></svg>
<div class="t" style="left:90px;top:769.1px;font-size:14px;color:#2e2e2e;">Sketches</div>
<svg class="a" style="left:22px;top:788px;overflow:visible;" width="16" height="19" viewBox="0 0 16 19"><path d="M2,6 L13,17" stroke="#101010" stroke-width="1.6"/><path d="M9,13 L14,18 L10,18z" fill="#101010"/><path d="M10,9 L13,1 L15,9 M11,6 H14" stroke="#101010" stroke-width="1.4" fill="none"/></svg>
<div class="t" style="left:49px;top:791.1px;font-size:14px;color:#2e2e2e;">Annotations</div>
<svg class="a" style="left:8px;top:814px;overflow:visible;" width="11" height="11" viewBox="0 0 11 11"><rect x="0.5" y="0.5" width="10" height="10" fill="#f4f4f4" stroke="#909090"/><path d="M2.5,5.5 H8.5" stroke="#404040"/></svg>
<svg class="a" style="left:21px;top:810px;overflow:visible;" width="20" height="21" viewBox="0 0 20 21"><path d="M5,1 L1,6 H9z M5,20 L1,15 H9z M15,1 L11,6 H19z M15,20 L11,15 H19z" fill="#1a4a8a"/><path d="M5,6 V15 M15,6 V15" stroke="#1a4a8a" stroke-width="2.4"/><path d="M2,8 H8 M2,13 H8 M12,8 H18 M12,13 H18" stroke="#3a7aba" stroke-width="1.4"/></svg>
<div class="t" style="left:49px;top:814.1px;font-size:14px;color:#2e2e2e;">Analysis</div>
<svg class="a" style="left:43px;top:833px;overflow:visible;" width="18" height="17" viewBox="0 0 18 17"><rect x="4" y="1" width="10" height="8" fill="#4a6ae0" stroke="#303a70"/><rect x="8" y="9" width="2" height="3" fill="#404040"/><rect x="1" y="12" width="16" height="4" fill="#c8c8cc" stroke="#505054"/></svg>
<div class="t" style="left:69px;top:837.1px;font-size:14px;color:#2e2e2e;">Jobs</div>
<svg class="a" style="left:41px;top:855px;overflow:visible;" width="20" height="20" viewBox="0 0 20 20"><rect x="1" y="1" width="7" height="8" fill="#b8c0d8" stroke="#303a50"/><path d="M1,5 H8 M4.5,1 V9" stroke="#303a50" stroke-width=".8"/><rect x="11" y="9" width="8" height="10" fill="#b8c0d8" stroke="#303a50"/><path d="M11,14 H19 M15,9 V19" stroke="#303a50" stroke-width=".8"/><path d="M4,10 V15 Q4,17 8,17" stroke="#d02020" stroke-width="1.8" fill="none"/></svg>
<div class="a" style="left:0px;top:0px;width:0px;height:0px;"></div>
<div class="a" style="left:69px;top:860.1px;width:108px;overflow:hidden"><div class="t" style="position:static;font-size:14px;color:#2e2e2e">Adaptivity Processes</div></div>
<svg class="a" style="left:41px;top:879px;overflow:visible;" width="20" height="18" viewBox="0 0 20 18"><rect x="1" y="1" width="7" height="16" fill="#a8b4d0" stroke="#506080"/><rect x="12" y="1" width="7" height="16" fill="#a8b4d0" stroke="#506080"/><path d="M8,6 L12,9 L8,12" stroke="#d02020" stroke-width="1.6" fill="none"/></svg>
<div class="t" style="left:69px;top:883.1px;font-size:14px;color:#2e2e2e;">Co-executions</div>
<svg class="a" style="left:41px;top:902px;overflow:visible;" width="20" height="18" viewBox="0 0 20 18"><rect x="1" y="1" width="7" height="16" fill="#d8b040" stroke="#806020"/><path d="M11,1 H19 L15,9 L19,17 H11 L15,9z" fill="#30a050"/><path d="M8,9 H13" stroke="#d02020" stroke-width="1.6"/></svg>
<div class="a" style="left:69px;top:906.1px;width:108px;overflow:hidden"><div class="t" style="position:static;font-size:14px;color:#2e2e2e">Optimization Processes</div></div>
<svg class="a" style="left:0;top:0" width="2048" height="965" viewBox="0 0 2048 965"><defs><linearGradient id="topg" gradientUnits="userSpaceOnUse" x1="1000" y1="250" x2="900" y2="700"><stop offset="0" stop-color="#04e6e6"/><stop offset="0.55" stop-color="#08e0e0"/><stop offset="1" stop-color="#14cacb"/></linearGradient><clipPath id="topclip"><polygon points="875,203 1301,401 875,692 429,406"/></clipPath><filter id="mb" x="-5%" y="-5%" width="110%" height="110%"><feGaussianBlur stdDeviation="0.45"/></filter></defs><polygon points="875,203 1301,401 875,692 429,406" fill="url(#topg)"/><polygon points="1301,401 875,692 875,720 1298,425" fill="#12acae"/><polygon points="875,692 429,406 429,430 875,720" fill="#1ccbcc"/><g stroke="#03282c" stroke-width="1.15" filter="url(#mb)"><line x1="883.6" y1="207.0" x2="437.7" y2="411.6"/><line x1="437.7" y1="411.6" x2="437.7" y2="438.6"/><line x1="892.3" y1="211.0" x2="446.5" y2="417.2"/><line x1="446.5" y1="417.2" x2="446.5" y2="444.2"/><line x1="901.0" y1="215.1" x2="455.4" y2="422.9"/><line x1="455.4" y1="422.9" x2="455.4" y2="449.9"/><line x1="909.8" y1="219.2" x2="464.3" y2="428.7"/><line x1="464.3" y1="428.7" x2="464.3" y2="455.7"/><line x1="918.6" y1="223.3" x2="473.3" y2="434.4"/><line x1="473.3" y1="434.4" x2="473.3" y2="461.4"/><line x1="927.5" y1="227.4" x2="482.4" y2="440.3"/><line x1="482.4" y1="440.3" x2="482.4" y2="467.3"/><line x1="936.4" y1="231.6" x2="491.6" y2="446.1"/><line x1="491.6" y1="446.1" x2="491.6" y2="473.1"/><line x1="945.4" y1="235.7" x2="500.8" y2="452.0"/><line x1="500.8" y1="452.0" x2="500.8" y2="479.0"/><line x1="954.5" y1="240.0" x2="510.1" y2="458.0"/><line x1="510.1" y1="458.0" x2="510.1" y2="485.0"/><line x1="963.6" y1="244.2" x2="519.4" y2="464.0"/><line x1="519.4" y1="464.0" x2="519.4" y2="491.0"/><line x1="972.8" y1="248.5" x2="528.8" y2="470.0"/><line x1="528.8" y1="470.0" x2="528.8" y2="497.0"/><line x1="982.0" y1="252.7" x2="538.3" y2="476.1"/><line x1="538.3" y1="476.1" x2="538.3" y2="503.1"/><line x1="991.3" y1="257.1" x2="547.9" y2="482.3"/><line x1="547.9" y1="482.3" x2="547.9" y2="509.3"/><line x1="1000.7" y1="261.4" x2="557.6" y2="488.4"/><line x1="557.6" y1="488.4" x2="557.6" y2="515.4"/><line x1="1010.1" y1="265.8" x2="567.3" y2="494.7"/><line x1="567.3" y1="494.7" x2="567.3" y2="521.7"/><line x1="1019.6" y1="270.2" x2="577.1" y2="501.0"/><line x1="577.1" y1="501.0" x2="577.1" y2="528.0"/><line x1="1029.1" y1="274.6" x2="587.0" y2="507.3"/><line x1="587.0" y1="507.3" x2="587.0" y2="534.3"/><line x1="1038.7" y1="279.1" x2="597.0" y2="513.7"/><line x1="597.0" y1="513.7" x2="597.0" y2="540.7"/><line x1="1048.4" y1="283.6" x2="607.0" y2="520.2"/><line x1="607.0" y1="520.2" x2="607.0" y2="547.2"/><line x1="1058.1" y1="288.1" x2="617.1" y2="526.6"/><line x1="617.1" y1="526.6" x2="617.1" y2="553.6"/><line x1="1067.9" y1="292.6" x2="627.3" y2="533.2"/><line x1="627.3" y1="533.2" x2="627.3" y2="560.2"/><line x1="1077.7" y1="297.2" x2="637.6" y2="539.8"/><line x1="637.6" y1="539.8" x2="637.6" y2="566.8"/><line x1="1087.7" y1="301.8" x2="648.0" y2="546.4"/><line x1="648.0" y1="546.4" x2="648.0" y2="573.4"/><line x1="1097.6" y1="306.5" x2="658.5" y2="553.2"/><line x1="658.5" y1="553.2" x2="658.5" y2="580.2"/><line x1="1107.7" y1="311.2" x2="669.0" y2="559.9"/><line x1="669.0" y1="559.9" x2="669.0" y2="586.9"/><line x1="1117.8" y1="315.9" x2="679.7" y2="566.7"/><line x1="679.7" y1="566.7" x2="679.7" y2="593.7"/><line x1="1128.0" y1="320.6" x2="690.4" y2="573.6"/><line x1="690.4" y1="573.6" x2="690.4" y2="600.6"/><line x1="1138.3" y1="325.4" x2="701.2" y2="580.6"/><line x1="701.2" y1="580.6" x2="701.2" y2="607.6"/><line x1="1148.6" y1="330.2" x2="712.1" y2="587.5"/><line x1="712.1" y1="587.5" x2="712.1" y2="614.5"/><line x1="1159.0" y1="335.0" x2="723.1" y2="594.6"/><line x1="723.1" y1="594.6" x2="723.1" y2="621.6"/><line x1="1169.5" y1="339.9" x2="734.2" y2="601.7"/><line x1="734.2" y1="601.7" x2="734.2" y2="628.7"/><line x1="1180.0" y1="344.8" x2="745.4" y2="608.9"/><line x1="745.4" y1="608.9" x2="745.4" y2="635.9"/><line x1="1190.6" y1="349.7" x2="756.7" y2="616.1"/><line x1="756.7" y1="616.1" x2="756.7" y2="643.1"/><line x1="1201.3" y1="354.7" x2="768.0" y2="623.4"/><line x1="768.0" y1="623.4" x2="768.0" y2="650.4"/><line x1="1212.1" y1="359.7" x2="779.5" y2="630.8"/><line x1="779.5" y1="630.8" x2="779.5" y2="657.8"/><line x1="1222.9" y1="364.7" x2="791.1" y2="638.2"/><line x1="791.1" y1="638.2" x2="791.1" y2="665.2"/><line x1="1233.9" y1="369.8" x2="802.8" y2="645.7"/><line x1="802.8" y1="645.7" x2="802.8" y2="672.7"/><line x1="1244.9" y1="374.9" x2="814.5" y2="653.2"/><line x1="814.5" y1="653.2" x2="814.5" y2="680.2"/><line x1="1255.9" y1="380.0" x2="826.4" y2="660.8"/><line x1="826.4" y1="660.8" x2="826.4" y2="687.8"/><line x1="1267.1" y1="385.2" x2="838.4" y2="668.5"/><line x1="838.4" y1="668.5" x2="838.4" y2="695.5"/><line x1="1278.3" y1="390.5" x2="850.5" y2="676.3"/><line x1="850.5" y1="676.3" x2="850.5" y2="703.3"/><line x1="1289.6" y1="395.7" x2="862.7" y2="684.1"/><line x1="862.7" y1="684.1" x2="862.7" y2="711.1"/><line x1="1287.2" y1="410.4" x2="1287.2" y2="434.5"/><line x1="1273.2" y1="420.0" x2="1273.2" y2="444.2"/><line x1="1259.0" y1="429.7" x2="1259.0" y2="454.0"/><line x1="1244.6" y1="439.5" x2="1244.6" y2="463.9"/><line x1="1229.9" y1="449.6" x2="1229.9" y2="474.1"/><line x1="1215.0" y1="459.8" x2="1215.0" y2="484.4"/><line x1="1199.8" y1="470.1" x2="1199.8" y2="494.9"/><line x1="1184.3" y1="480.7" x2="1184.3" y2="505.5"/><line x1="1168.6" y1="491.4" x2="1168.6" y2="516.4"/><line x1="1152.7" y1="502.3" x2="1152.7" y2="527.4"/><line x1="1136.4" y1="513.4" x2="1136.4" y2="538.6"/><line x1="1068.4" y1="559.9" x2="1068.4" y2="585.5"/><line x1="1050.7" y1="572.0" x2="1050.7" y2="597.8"/><line x1="1032.6" y1="584.3" x2="1032.6" y2="610.2"/><line x1="1014.2" y1="596.9" x2="1014.2" y2="622.9"/><line x1="995.4" y1="609.7" x2="995.4" y2="635.9"/><line x1="976.3" y1="622.8" x2="976.3" y2="649.1"/><line x1="956.8" y1="636.1" x2="956.8" y2="662.5"/><line x1="936.9" y1="649.7" x2="936.9" y2="676.2"/><line x1="916.7" y1="663.5" x2="916.7" y2="690.2"/><line x1="896.1" y1="677.6" x2="896.1" y2="704.5"/><line x1="1081.9" y1="550.7" x2="1081.9" y2="576.2"/><line x1="1120.5" y1="524.3" x2="1120.5" y2="549.6"/><line x1="1115.0" y1="528.1" x2="1115.0" y2="553.4"/><line x1="1109.4" y1="531.9" x2="1109.4" y2="557.2"/><line x1="1103.9" y1="535.7" x2="1103.9" y2="561.1"/><line x1="1098.2" y1="539.5" x2="1098.2" y2="564.9"/><line x1="1300.5" y1="407.0" x2="875.0" y2="699.0"/><line x1="875.0" y1="699.0" x2="429.0" y2="413.0"/><line x1="1300.0" y1="413.0" x2="875.0" y2="706.0"/><line x1="875.0" y1="706.0" x2="429.0" y2="420.0"/><line x1="1299.5" y1="419.0" x2="875.0" y2="713.0"/><line x1="875.0" y1="713.0" x2="429.0" y2="427.0"/><g clip-path="url(#topclip)"><line x1="700.0" y1="134.1" x2="1287.2" y2="410.4"/><line x1="700.0" y1="147.4" x2="1273.2" y2="420.0"/><line x1="700.0" y1="162.7" x2="1259.0" y2="429.7"/><line x1="700.0" y1="177.9" x2="1244.6" y2="439.5"/><line x1="700.0" y1="193.0" x2="1229.9" y2="449.6"/><line x1="700.0" y1="207.9" x2="1215.0" y2="459.8"/><line x1="700.0" y1="222.7" x2="1199.8" y2="470.1"/><line x1="700.0" y1="237.3" x2="1184.3" y2="480.7"/><line x1="700.0" y1="251.7" x2="1168.6" y2="491.4"/><line x1="700.0" y1="265.8" x2="1152.7" y2="502.3"/><line x1="700.0" y1="279.6" x2="1136.4" y2="513.4"/><line x1="700.0" y1="348.2" x2="1068.4" y2="559.9"/><line x1="700.0" y1="373.3" x2="1050.7" y2="572.0"/><line x1="700.0" y1="398.4" x2="1032.6" y2="584.3"/><line x1="700.0" y1="423.4" x2="1014.2" y2="596.9"/><line x1="700.0" y1="448.2" x2="995.4" y2="609.7"/><line x1="700.0" y1="472.8" x2="976.3" y2="622.8"/><line x1="700.0" y1="497.1" x2="956.8" y2="636.1"/><line x1="700.0" y1="520.8" x2="936.9" y2="649.7"/><line x1="700.0" y1="543.6" x2="916.7" y2="663.5"/><line x1="700.0" y1="564.4" x2="896.1" y2="677.6"/><line x1="700.0" y1="333.5" x2="1081.9" y2="550.7"/><line x1="700.0" y1="293.9" x2="1120.5" y2="524.3"/><line x1="700.0" y1="299.7" x2="1115.0" y2="528.1"/><line x1="700.0" y1="305.4" x2="1109.4" y2="531.9"/><line x1="700.0" y1="311.1" x2="1103.9" y2="535.7"/><line x1="700.0" y1="316.7" x2="1098.2" y2="539.5"/></g></g><g stroke="#ea1018" stroke-width="2.1" stroke-linecap="round"><line x1="875.0" y1="203.0" x2="1301.0" y2="401.0"/><line x1="1301.0" y1="401.0" x2="875.0" y2="692.0"/><line x1="875.0" y1="203.0" x2="429.0" y2="406.0"/><line x1="875.0" y1="692.0" x2="429.0" y2="406.0"/><line x1="875.0" y1="692.0" x2="875.0" y2="720.0"/><line x1="1301.0" y1="401.0" x2="1298.0" y2="425.0"/><line x1="875.0" y1="720.0" x2="1298.0" y2="425.0"/><line x1="875.0" y1="720.0" x2="429.0" y2="430.0"/><line x1="875.0" y1="203.0" x2="875.0" y2="226.0"/><line x1="875.0" y1="226.0" x2="1277.4" y2="417.5"/><line x1="875.0" y1="226.0" x2="429.0" y2="429.0"/><line x1="1277.4" y1="417.5" x2="1298.0" y2="425.0"/><line x1="700.0" y1="288.1" x2="1126.0" y2="520.5"/><line x1="700.0" y1="310.2" x2="1104.7" y2="535.1"/><line x1="700.0" y1="322.3" x2="1092.6" y2="543.4"/><line x1="700.0" y1="344.5" x2="1071.0" y2="558.1"/><line x1="1126.5" y1="520.2" x2="1126.5" y2="545.2"/><line x1="1092.3" y1="543.6" x2="1092.3" y2="568.6"/><line x1="1071.5" y1="557.8" x2="1092.3" y2="568.6"/><line x1="1104.7" y1="535.1" x2="1126.5" y2="545.2"/></g></svg>
<svg class="a" style="left:1892px;top:119px;overflow:visible;" width="90" height="130" viewBox="0 0 90 130"><path d="M40.6,44.5 C23,56 10,75 10.8,95.3 L40.6,80 L70.3,95.3 C71,75 58,56 40.6,44.5z" fill="#146a7c" stroke="#e4d4f8" stroke-width="2"/><path d="M9.4,108.4 L40.6,90.3 L71.8,108.4 C76,118 60,125.5 40.6,125.5 C21,125.5 5,118 9.4,108.4z" fill="#146a7c" stroke="#e4d4f8" stroke-width="2"/><path d="M40.6,34 V102" stroke="#e4d4f8" stroke-width="2"/><circle cx="40.6" cy="34.4" r="4.6" fill="#e4d4f8"/><rect x="36" y="102" width="10.5" height="10" fill="#e00010"/><text x="36.5" y="26" font-family="Liberation Sans" font-size="11" fill="#d0c040">Y</text><text x="-2.5" y="104" font-family="Liberation Sans" font-size="11" fill="#d0c040">Z</text><text x="75" y="104" font-family="Liberation Sans" font-size="11" fill="#d0c040">X</text></svg>
<svg class="a" style="left:354px;top:784px;overflow:visible;" width="108" height="96" viewBox="0 0 108 96"><path d="M53,63 V36" stroke="#0c9020" stroke-width="5"/><path d="M46,38 Q46,30 53,24 Q60,30 60,38 Q56,41 53,40 Q50,41 46,38z" fill="#10a020"/><path d="M53,63 L30,76" stroke="#0c10b0" stroke-width="5"/><path d="M18,83 L31,70 Q38,72 39,79 L34,82z" fill="#1018c0"/><path d="M53,63 L76,76" stroke="#c01010" stroke-width="5"/><path d="M87,83 L74,70 Q67,72 66,79 L71,82z" fill="#c81414"/><text x="46" y="15" font-family="Liberation Sans" font-size="15" fill="#e8e8f0">Y</text><text x="-1" y="95" font-family="Liberation Sans" font-size="15" fill="#e8e8f0">Z</text><text x="93" y="95" font-family="Liberation Sans" font-size="15" fill="#e8e8f0">X</text></svg>
<div class="a" style="left:178px;top:921px;width:1870px;height:44px;background:linear-gradient(#cfcfd1,#c4c3c6 60%,#bbbabe)"></div>
<div class="a" style="left:0px;top:960px;width:178px;height:5px;background:#c8c8ca"></div>
<div class="a" style="left:191px;top:929px;width:22px;height:25px;background:#e8e8ea;border:1px solid #bcbcc0;border-radius:2px"></div>
<svg class="a" style="left:193px;top:934px;overflow:visible;" width="18" height="15" viewBox="0 0 18 15"><path d="M1,7.5 L8,1 V5 H17 V10 H8 V14z" fill="#080808"/></svg>
<div class="a" style="left:218px;top:929px;width:21px;height:25px;background:#e4e4e6;border:1px solid #bcbcc0;border-radius:2px"></div>
<svg class="a" style="left:221px;top:933px;overflow:visible;" width="15" height="16" viewBox="0 0 15 16"><path d="M2,2 L13,14 M13,2 L2,14" stroke="#e02020" stroke-width="2"/></svg>
<div class="t" style="left:248px;top:936.0px;font-size:14.2px;color:#262626;">Set the data using the Element Type dialog</div>
<svg class="a" style="left:1922px;top:929px;overflow:visible;" width="126" height="30" viewBox="0 0 126 30"><path d="M8,3 Q14,0 15,4 Q15,8 10,9 Q16,10 15,15 Q12,22 4,24 M8,12 Q3,18 3,25" stroke="#1d2a6a" stroke-width="2" fill="none"/><path d="M26,10 Q20,8 18,12 Q18,15 22,16 Q26,17 24,21 Q21,24 15,22" stroke="#1d2a6a" stroke-width="2.4" fill="none"/><text x="33" y="24" font-family="Liberation Sans" font-weight="bold" font-style="italic" font-size="16.5" fill="#1d2a6a" textLength="89" lengthAdjust="spacingAndGlyphs">SIMULIA</text></svg>
<div class="a" style="left:11px;top:129px;width:825px;height:646px;border-radius:8px;background:linear-gradient(140deg,#f9f8fb 0%,#f8f7fa 50%,#efeef1 78%,#dedde1 100%);box-shadow:0 10px 28px rgba(0,0,0,.38),0 0 0 1px rgba(0,0,0,.10);overflow:hidden">
<div class="a" style="left:0;top:0;width:825px;height:35px;background:#f1eef3"></div>
</div>
<svg class="a" style="left:21px;top:137px;overflow:visible;" width="18" height="19" viewBox="0 0 18 19"><rect x="6" y="0.5" width="6" height="4" rx="1" fill="#7868b0"/><rect x="6" y="14.5" width="6" height="4" rx="1" fill="#7868b0"/><path d="M9,3 C15,3 18,7 17.5,9.5 C18,12 15,16 9,16 C3,16 0,12 0.5,9.5 C0,7 3,3 9,3z" fill="#8a7cc4"/><path d="M1,9.5 H17" stroke="#f4f0f8" stroke-width="1.6"/></svg>
<div class="t" style="left:46px;top:140.1px;font-size:14.1px;color:#303030;">Element Type</div>
<svg class="a" style="left:810px;top:140px;overflow:visible;" width="14" height="14" viewBox="0 0 14 14"><path d="M1,1 L13,13 M13,1 L1,13" stroke="#383838" stroke-width="1.3"/></svg>
<div class="a" style="left:20px;top:185px;width:180px;height:62px;border:1px solid #dddce0;border-radius:2px"></div>
<div class="a" style="left:30px;top:180px;width:108px;height:12px;background:#f8f7fa"></div>
<div class="t" style="left:35px;top:180.1px;font-size:14px;color:#2e2e2e;">Element Library</div>
<svg class="a" style="left:34px;top:210px;overflow:visible;" width="16" height="16" viewBox="0 0 16 16"><circle cx="8" cy="8" r="7.3" fill="#0c5fb8"/><circle cx="8" cy="8" r="3.3" fill="#fff"/></svg>
<div class="t" style="left:55px;top:211.1px;font-size:14px;">Standard</div>
<svg class="a" style="left:121px;top:210px;overflow:visible;" width="16" height="16" viewBox="0 0 16 16"><circle cx="8" cy="8" r="6.8" fill="#f2f2f4" stroke="#8a8a8e" stroke-width="1.1"/></svg>
<div class="t" style="left:142px;top:211.1px;font-size:14px;">Explicit</div>
<div class="a" style="left:20px;top:265px;width:170px;height:47px;border:1px solid #dddce0;border-radius:2px"></div>
<div class="a" style="left:30px;top:258px;width:116px;height:14px;background:#f8f7fa"></div>
<div class="t" style="left:35px;top:259.1px;font-size:14px;color:#2e2e2e;">Geometric Order</div>
<svg class="a" style="left:30px;top:285px;overflow:visible;" width="16" height="16" viewBox="0 0 16 16"><circle cx="8" cy="8" r="7.3" fill="#0c5fb8"/><circle cx="8" cy="8" r="3.3" fill="#fff"/></svg>
<div class="t" style="left:51px;top:286.1px;font-size:14px;">Linear</div>
<svg class="a" style="left:98px;top:285px;overflow:visible;" width="16" height="16" viewBox="0 0 16 16"><circle cx="8" cy="8" r="6.8" fill="#f2f2f4" stroke="#8a8a8e" stroke-width="1.1"/></svg>
<div class="t" style="left:120px;top:286.1px;font-size:14px;">Quadratic</div>
<div class="a" style="left:206px;top:185px;width:620px;height:121px;border:1px solid #dddce0;border-radius:2px"></div>
<div class="a" style="left:215px;top:180px;width:51px;height:12px;background:#f8f7fa"></div>
<div class="t" style="left:220px;top:179.1px;font-size:14px;color:#2e2e2e;">Family</div>
<div class="a" style="left:213px;top:203px;width:607px;height:97px;background:#fff;border:1px solid #c4c4c8"></div>
<div class="a" style="left:798px;top:204px;width:21px;height:95px;background:#f7f7f9"></div>
<div class="a" style="left:215px;top:273px;width:582px;height:23px;background:#0a72d6"></div>
<div class="t" style="left:219px;top:209.0px;font-size:14.2px;">Coupled Temperature-Pore pressure</div>
<div class="t" style="left:219px;top:232.0px;font-size:14.2px;">Cylindrical</div>
<div class="t" style="left:219px;top:254.5px;font-size:14.2px;">Gasket</div>
<div class="t" style="left:219px;top:277.5px;font-size:14.2px;color:#ffffff;">Heat Transfer</div>
<div class="a" style="left:806px;top:252px;width:2px;height:12px;background:#8a8a8e"></div>
<svg class="a" style="left:266px;top:286px;overflow:visible;" width="26" height="34" viewBox="0 0 26 34"><path d="M2,1 V25 L8,19.5 L12.5,30 L17,28 L12.5,18 H20z" fill="#fff" stroke="#101010" stroke-width="1.6" stroke-linejoin="round"/></svg>
<div class="a" style="left:30px;top:357px;width:783px;height:312px;background:#f9f8fb;border:1px solid #e0dfe3"></div>
<div class="a" style="left:76px;top:331px;width:62px;height:26px;background:#efeef1;border:1px solid #e2e1e5;border-bottom:none"></div>
<div class="a" style="left:138px;top:331px;width:41px;height:26px;background:#efeef1;border:1px solid #e2e1e5;border-bottom:none;border-left:none"></div>
<div class="a" style="left:30px;top:328px;width:46px;height:30px;background:#f9f8fb;border:1px solid #e0dfe3;border-bottom:none"></div>
<div class="t" style="left:41px;top:336.6px;font-size:14px;">Hex</div>
<div class="t" style="left:85px;top:338.1px;font-size:14px;">Wedge</div>
<div class="t" style="left:149px;top:338.1px;font-size:14px;">Tet</div>
<div class="a" style="left:45px;top:372px;width:15px;height:15px;background:#f0f0f2;border:1.2px solid #8a8a8e;border-radius:3px"></div>
<div class="t" style="left:65px;top:372.6px;font-size:14px;transform:scaleX(1.024);transform-origin:0 0">Reduced integration</div>
<div class="a" style="left:203px;top:372px;width:15px;height:15px;background:#f0f0f2;border:1.2px solid #8a8a8e;border-radius:3px"></div>
<div class="t" style="left:223px;top:372.6px;font-size:14px;transform:scaleX(1.07);transform-origin:0 0">Convection/Diffusion</div>
<div class="a" style="left:370px;top:372px;width:15px;height:15px;background:#f0f0f2;border:1.2px solid #8a8a8e;border-radius:3px"></div>
<div class="t" style="left:390px;top:372.6px;font-size:14px;transform:scaleX(1.027);transform-origin:0 0">Dispersion control</div>
<div class="a" style="left:37px;top:411px;width:772px;height:195px;border:1px solid #e6e5e9;background:#faf9fc"></div>
<div class="a" style="left:46px;top:404px;width:118px;height:14px;background:#f9f8fb"></div>
<div class="t" style="left:52px;top:405.1px;font-size:14px;">Element Controls</div>
<div class="t" style="left:47px;top:432.5px;font-size:14.2px;">There are no applicable element controls for these settings.</div>
<div class="t" style="left:45.5px;top:623.0px;font-size:14.2px;">DC3D8:&nbsp; An 8-node linear heat transfer brick.</div>
<div class="t" style="left:23px;top:690.1px;font-size:14px;color:#202020;font-weight:bold">Note:</div>
<div class="t" style="left:70px;top:690.0px;font-size:14.2px;">To select an element shape for meshing,</div>
<div class="t" style="left:70px;top:707.5px;font-size:14.2px;transform:scaleX(1.032);transform-origin:0 0">select "Mesh-&gt;Controls" from the main menu bar.</div>
<div class="a" style="left:16px;top:735px;width:815px;height:2px;background:#a9a9ac"></div>
<div class="a" style="left:113px;top:745px;width:72px;height:24px;background:#f4f4f6;border:1px solid #d0d0d4;border-radius:4px;box-shadow:0 1px 0 #c4c4c8"></div>
<div class="t" style="left:113px;width:72px;text-align:center;top:750.1px">OK</div>
<div class="a" style="left:386px;top:745px;width:72px;height:24px;background:#f4f4f6;border:1px solid #d0d0d4;border-radius:4px;box-shadow:0 1px 0 #c4c4c8"></div>
<div class="t" style="left:386px;width:72px;text-align:center;top:750.1px">Defaults</div>
<div class="a" style="left:660px;top:745px;width:71px;height:24px;background:#f4f4f6;border:1px solid #d0d0d4;border-radius:4px;box-shadow:0 1px 0 #c4c4c8"></div>
<div class="t" style="left:660px;width:71px;text-align:center;top:750.1px">Cancel</div>
</body></html>
